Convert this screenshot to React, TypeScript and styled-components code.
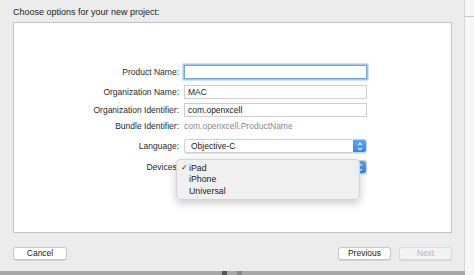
import React from "react";
import styled, { createGlobalStyle } from "styled-components";

const Global = createGlobalStyle`
  html, body { margin: 0; padding: 0; background: #f6f6f6; }
  body { width: 474px; height: 275px; overflow: hidden; font-family: "Liberation Sans", Arial, sans-serif; }
  #root { width: 474px; height: 275px; }
`;

const Screen = styled.div`
  width: 474px;
  height: 275px;
  display: flex;
  flex-direction: column;
`;

const Top = styled.div`
  display: flex;
  height: 271px;
`;

const Window = styled.div`
  width: 465px;
  height: 271px;
  background: #ececec;
  border-right: 1px solid #d6d6d6;
  box-sizing: border-box;
  padding: 0 12px 0 13px;
  display: flex;
  flex-direction: column;
`;

const Side = styled.div`
  flex: 1;
  background: #f7f7f7;
  padding-top: 16px;
`;

const SideLine = styled.div`
  height: 1px;
  background: #c9c9c9;
`;

const BottomBar = styled.div`
  width: 465px;
  height: 4px;
  background: #a8a8a8;
  display: flex;
  gap: 10px;
  padding-left: 222px;
  box-sizing: border-box;
`;

const Tick = styled.div<{ $dark?: boolean }>`
  width: 5px;
  height: 4px;
  background: ${(p) => (p.$dark ? "#555" : "#888")};
`;

const Title = styled.div`
  height: 22px;
  font-size: 9px;
  color: #222;
  line-height: 24px;
  white-space: nowrap;
`;

const Panel = styled.div`
  position: relative;
  height: 211px;
  background: #fff;
  border: 1px solid #c4c4c4;
  box-sizing: border-box;
`;

const Form = styled.div`
  display: flex;
  flex-direction: column;
  padding-top: 41px;
`;

const Row = styled.div<{ $mt: number }>`
  display: grid;
  grid-template-columns: 165px 183px;
  column-gap: 5px;
  align-items: center;
  height: 16px;
  margin-top: ${(p) => p.$mt}px;
`;

const Label = styled.div`
  text-align: right;
  font-size: 8.5px;
  color: #2a2a2a;
  white-space: nowrap;
  margin-left: -30px;
`;

const TextField = styled.div<{ $focus?: boolean }>`
  height: 14px;
  box-sizing: border-box;
  border: 1px solid ${(p) => (p.$focus ? "#6fa6e3" : "#cfcfcf")};
  box-shadow: ${(p) => (p.$focus ? "0 0 0 1.5px #9fc5f0" : "none")};
  background: #fff;
  font-size: 8.5px;
  color: #222;
  padding-left: 3px;
  line-height: 12px;
  white-space: nowrap;
`;

const Plain = styled.div`
  font-size: 8.5px;
  color: #8a8a8a;
  white-space: nowrap;
`;

const Popup = styled.div`
  height: 14px;
  box-sizing: border-box;
  border: 1px solid #d0d0d0;
  border-radius: 3px;
  background: #fff;
  display: flex;
  align-items: stretch;
  overflow: hidden;
  box-shadow: 0 0.5px 1px rgba(0,0,0,0.12);
`;

const PopupText = styled.div`
  flex: 1;
  font-size: 8.5px;
  color: #222;
  padding-left: 6px;
  line-height: 12px;
`;

const Stepper = styled.div`
  width: 13px;
  background: linear-gradient(#5aa6f7, #2f86ef);
  display: flex;
  align-items: center;
  justify-content: center;
`;

const Menu = styled.div`
  position: absolute;
  left: 162px;
  top: 136px;
  width: 184px;
  height: 41px;
  box-sizing: border-box;
  background: rgba(240, 240, 240, 0.98);
  border: 1px solid #d4d4d4;
  border-radius: 4px;
  box-shadow: 0 3px 8px rgba(0,0,0,0.22);
  padding-top: 2px;
`;

const MenuItem = styled.div`
  display: flex;
  height: 11.5px;
  align-items: center;
  font-size: 8.8px;
  color: #222;
`;

const Check = styled.span`
  width: 8px;
  padding-left: 4px;
  font-size: 8px;
`;

const Footer = styled.div`
  display: flex;
  align-items: center;
  padding-top: 14px;
`;

const Button = styled.div<{ $disabled?: boolean; $w: number }>`
  width: ${(p) => p.$w}px;
  height: 13px;
  box-sizing: border-box;
  border: 1px solid ${(p) => (p.$disabled ? "#dddddd" : "#c8c8c8")};
  border-radius: 3px;
  background: ${(p) => (p.$disabled ? "#f3f3f3" : "#fff")};
  color: ${(p) => (p.$disabled ? "#b5b5b5" : "#222")};
  font-size: 8.5px;
  text-align: center;
  line-height: 11px;
  box-shadow: 0 0.5px 1px rgba(0,0,0,0.1);
`;

const Spacer = styled.div`
  flex: 1;
`;

const Gap = styled.div`
  width: 8px;
`;

const Arrows = () => (
  <svg width="6" height="9" viewBox="0 0 6 9">
    <path d="M1 3.2 L3 1.2 L5 3.2 M1 5.8 L3 7.8 L5 5.8" stroke="#fff" strokeWidth="1.1" fill="none" />
  </svg>
);

export default function App() {
  return (
    <Screen>
      <Global />
      <Top>
        <Window>
          <Title>Choose options for your new project:</Title>
          <Panel>
            <Form>
              <Row $mt={0}>
                <Label>Product Name:</Label>
                <TextField $focus />
              </Row>
              <Row $mt={4}>
                <Label>Organization Name:</Label>
                <TextField>MAC</TextField>
              </Row>
              <Row $mt={2}>
                <Label>Organization Identifier:</Label>
                <TextField>com.openxcell</TextField>
              </Row>
              <Row $mt={0}>
                <Label>Bundle Identifier:</Label>
                <Plain>com.openxcell.ProductName</Plain>
              </Row>
              <Row $mt={4}>
                <Label>Language:</Label>
                <Popup>
                  <PopupText>Objective-C</PopupText>
                  <Stepper><Arrows /></Stepper>
                </Popup>
              </Row>
              <Row $mt={5}>
                <Label>Devices:</Label>
                <Popup>
                  <PopupText />
                  <Stepper><Arrows /></Stepper>
                </Popup>
              </Row>
            </Form>
            <Menu>
              <MenuItem><Check>✓</Check>iPad</MenuItem>
              <MenuItem><Check />iPhone</MenuItem>
              <MenuItem><Check />Universal</MenuItem>
            </Menu>
          </Panel>
          <Footer>
            <Button $w={54}>Cancel</Button>
            <Spacer />
            <Button $w={53}>Previous</Button>
            <Gap />
            <Button $w={53} $disabled>Next</Button>
          </Footer>
        </Window>
        <Side>
          <SideLine />
        </Side>
      </Top>
      <BottomBar>
        <Tick $dark />
        <Tick />
      </BottomBar>
    </Screen>
  );
}
